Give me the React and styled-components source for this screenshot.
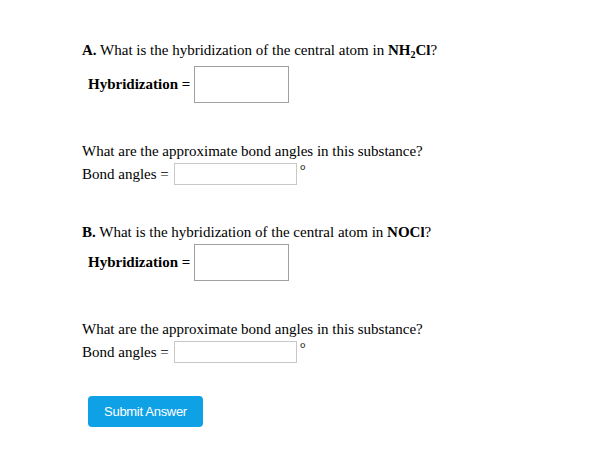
import React from 'react'
import styled, { createGlobalStyle } from 'styled-components';

const Global = createGlobalStyle`
    body {
        margin: 0;
        background: #fff;
        font-family: "Liberation Serif", "Times New Roman", serif;
        color: #000;
    }
`

export default function App() {
    const parts = [
        { letter: 'A.', formula: <>NH<sub>2</sub>Cl</>, tall: true },
        { letter: 'B.', formula: <>NOCl</>, tall: false },
    ];
    return (
        <Page>
            <Global />
            {parts.map(part => (
                <Part key={part.letter}>
                    <Question tall={part.tall}>
                        <b>{part.letter}</b> What is the hybridization of the central atom in <b>{part.formula}</b>?
                    </Question>
                    <HybridRow>
                        <HybridLabel>Hybridization =</HybridLabel>
                        <BigInput />
                    </HybridRow>
                    <Prompt>What are the approximate bond angles in this substance?</Prompt>
                    <AngleRow>
                        <span>Bond angles =</span>
                        <SmallInput />
                        <Degree>°</Degree>
                    </AngleRow>
                </Part>
            ))}
            <SubmitButton>Submit Answer</SubmitButton>
        </Page>
    )
}

const Page = styled.div`
    padding: 40px 0 0 82px;
    font-size: 15px;
`
const Part = styled.section`
    display: flex;
    flex-direction: column;
    margin-bottom: 37px;
`
const Question = styled.div`
    line-height: 20px;
    padding-bottom: ${props => (props.tall ? '4px' : '0')};
    b sub {
        font-size: 10px;
        vertical-align: -3px;
        line-height: 0;
    }
`
const HybridRow = styled.div`
    display: flex;
    align-items: center;
    margin: 2px 0 0 6px;
`
const HybridLabel = styled.span`
    font-weight: bold;
    margin-right: 4px;
`
const BigInput = styled.input`
    width: 95px;
    height: 37px;
    box-sizing: border-box;
    border: 1px solid #a0a0a0;
    margin: 0;
`
const Prompt = styled.div`
    margin-top: 38px;
    line-height: 20px;
`
const AngleRow = styled.div`
    display: flex;
    align-items: center;
    margin-top: 2px;
`
const SmallInput = styled.input`
    width: 123px;
    height: 22px;
    box-sizing: border-box;
    border: 1px solid #c8c8c8;
    margin: 0 0 0 5px;
`
const Degree = styled.span`
    font-size: 15px;
    margin-left: 3px;
    align-self: flex-start;
    margin-top: -1px;
`
const SubmitButton = styled.button`
    margin: -4px 0 0 6px;
    width: 115px;
    height: 31px;
    border: none;
    border-radius: 4px;
    background: #0fa1e6;
    color: #fff;
    font-family: "Liberation Sans", Arial, sans-serif;
    font-size: 13px;
    letter-spacing: -0.3px;
`
